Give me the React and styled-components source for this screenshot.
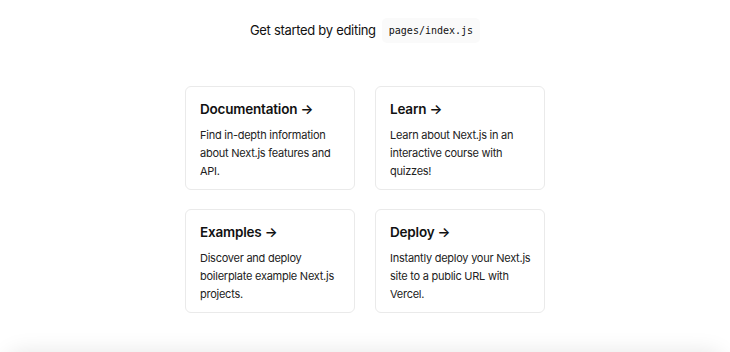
import React from "react";
import styled, { createGlobalStyle } from "styled-components";

const Global = createGlobalStyle`
  html, body { margin: 0; padding: 0; background: #fff; }
  body {
    font-family: Inter, "Noto Sans", "Liberation Sans", sans-serif;
    color: #000;
    overflow: hidden;
  }
`;

const Page = styled.div`
  display: flex;
  flex-direction: column;
  align-items: center;
`;

const Description = styled.p`
  margin: 18px 0 0;
  display: flex;
  align-items: center;
  gap: 6px;
  font-size: 13px;
  letter-spacing: -0.3px;
  line-height: 25px;
  color: #111;
`;

const Code = styled.code`
  background: #fafafa;
  border-radius: 5px;
  padding: 0 7px;
  line-height: 25px;
  font-size: 10px;
  letter-spacing: 0;
  font-family: "DejaVu Sans Mono", "Liberation Mono", monospace;
  color: #111;
`;

const Grid = styled.div`
  margin-top: 43px;
  display: grid;
  grid-template-columns: repeat(2, 170px);
  gap: 19px 20px;
`;

const Card = styled.a`
  display: block;
  box-sizing: border-box;
  height: 104px;
  padding: 14px 10px 10px 14px;
  border: 1px solid #eaeaea;
  border-radius: 6px;
  color: inherit;
  text-decoration: none;
`;

const Title = styled.h2`
  margin: 0 0 9px;
  font-size: 13.5px;
  letter-spacing: -0.2px;
  line-height: 16px;
  font-weight: 600;
  color: #111;
`;

const Text = styled.p`
  margin: 0;
  font-size: 11px;
  letter-spacing: -0.25px;
  line-height: 18px;
  color: #222;
`;

const Footer = styled.footer`
  margin-top: 39px;
  align-self: stretch;
  margin-left: 6px;
  margin-right: 6px;
  height: 60px;
  border-radius: 16px;
  background: #fff;
  box-shadow: 0 0 22px rgba(0, 0, 0, 0.1);
`;

const cards = [
  { title: "Documentation", text: "Find in-depth information about Next.js features and API." },
  { title: "Learn", text: "Learn about Next.js in an interactive course with quizzes!" },
  { title: "Examples", text: "Discover and deploy boilerplate example Next.js projects." },
  { title: "Deploy", text: "Instantly deploy your Next.js site to a public URL with Vercel." },
];

export default function App() {
  return (
    <>
      <Global />
      <Page>
        <Description>
          Get started by editing <Code>pages/index.js</Code>
        </Description>
        <Grid>
          {cards.map((c) => (
            <Card key={c.title} href="#">
              <Title>{c.title} &rarr;</Title>
              <Text>{c.text}</Text>
            </Card>
          ))}
        </Grid>
        <Footer />
      </Page>
    </>
  );
}
